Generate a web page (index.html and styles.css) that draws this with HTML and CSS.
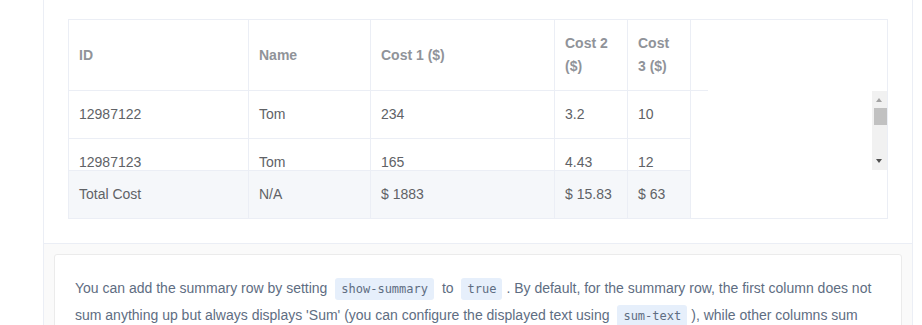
FILE: index.html
```html
<!DOCTYPE html>
<html lang="en">
<head>
<meta charset="utf-8">
<title>Table summary row</title>
<link rel="stylesheet" href="styles.css">
</head>
<body>
<div class="demo-block">
  <div class="source">
    <div class="el-table" role="table">
      <div class="thead" role="rowgroup">
        <div class="tr head-row" role="row">
          <div class="th" role="columnheader"><div class="cell">ID</div></div>
          <div class="th" role="columnheader"><div class="cell">Name</div></div>
          <div class="th" role="columnheader"><div class="cell">Cost 1 ($)</div></div>
          <div class="th" role="columnheader"><div class="cell">Cost 2 ($)</div></div>
          <div class="th" role="columnheader"><div class="cell">Cost 3 ($)</div></div>
          <div class="th gutter"></div>
        </div>
      </div>
      <div class="tbody" role="rowgroup">
        <div class="tr" role="row">
          <div class="td" role="cell"><div class="cell">12987122</div></div>
          <div class="td" role="cell"><div class="cell">Tom</div></div>
          <div class="td" role="cell"><div class="cell">234</div></div>
          <div class="td" role="cell"><div class="cell">3.2</div></div>
          <div class="td" role="cell"><div class="cell">10</div></div>
        </div>
        <div class="tr" role="row">
          <div class="td" role="cell"><div class="cell">12987123</div></div>
          <div class="td" role="cell"><div class="cell">Tom</div></div>
          <div class="td" role="cell"><div class="cell">165</div></div>
          <div class="td" role="cell"><div class="cell">4.43</div></div>
          <div class="td" role="cell"><div class="cell">12</div></div>
        </div>
        <div class="scrollbar" aria-hidden="true">
          <span class="arrow up"></span>
          <span class="thumb"></span>
          <span class="arrow down"></span>
        </div>
      </div>
      <div class="tfoot" role="rowgroup">
        <div class="tr foot-row" role="row">
          <div class="td" role="cell"><div class="cell">Total Cost</div></div>
          <div class="td" role="cell"><div class="cell">N/A</div></div>
          <div class="td" role="cell"><div class="cell">$ 1883</div></div>
          <div class="td" role="cell"><div class="cell">$ 15.83</div></div>
          <div class="td" role="cell"><div class="cell">$ 63</div></div>
        </div>
      </div>
    </div>
  </div>
  <div class="meta">
    <div class="description">
      <p>You can add the summary row by setting <code>show-summary</code> to <code>true</code>. By default, for the summary row, the first column does not sum anything up but always displays 'Sum' (you can configure the displayed text using <code>sum-text</code>), while other columns sum every number in that column up and display them. You can of course define your own sum behaviour. To do so, pass a method to <code>summary-method</code>, which returns an array, and each element of the returned array will be displayed in the columns of the summary row.</p>
    </div>
  </div>
</div>
</body>
</html>
```

FILE: styles.css
```css
* {
  box-sizing: border-box;
}

html, body {
  margin: 0;
  padding: 0;
  background: #ffffff;
}

body {
  font-family: "Liberation Sans", Arial, sans-serif;
  font-size: 14px;
  color: #606266;
}

.demo-block {
  margin-left: 43px;
  width: 870px;
  border-left: 1px solid #ebeef5;
  border-right: 1px solid #ebeef5;
}

.source {
  padding: 19px 24px 24px 24px;
  border-bottom: 1px solid #ebeef5;
}

.el-table {
  width: 820px;
  border: 1px solid #ebeef5;
  background: #ffffff;
}

.tr {
  display: grid;
  grid-template-columns: 180px 122px 184px 73px 63px;
}

.head-row {
  grid-template-columns: 180px 122px 184px 73px 63px 17px;
}

.th,
.td {
  display: flex;
  align-items: center;
  padding: 12px 0;
  border-right: 1px solid #ebeef5;
  border-bottom: 1px solid #ebeef5;
}

.th.gutter {
  border-right: none;
  padding: 0;
}

.cell {
  padding: 0 10px;
  line-height: 23px;
  word-break: normal;
}

.th .cell {
  font-weight: bold;
  color: #909399;
}

.tbody {
  position: relative;
  height: 79px;
  overflow: hidden;
}

.tfoot .tr {
  border-top: 1px solid #ebeef5;
  width: 622px;
}

.foot-row .td {
  background: #f5f7fa;
  border-bottom: none;
}

.scrollbar {
  position: absolute;
  top: 0;
  right: 0;
  width: 15px;
  height: 80px;
  background: #f1f1f1;
}

.scrollbar .thumb {
  position: absolute;
  left: 2px;
  top: 17px;
  width: 13px;
  height: 17px;
  background: #c1c1c1;
}

.scrollbar .arrow {
  position: absolute;
  left: 4px;
  width: 0;
  height: 0;
  border-left: 3.5px solid transparent;
  border-right: 3.5px solid transparent;
}

.scrollbar .arrow.up {
  top: 7px;
  border-bottom: 4px solid #a3a3a3;
}

.scrollbar .arrow.down {
  top: 68px;
  border-top: 4px solid #505050;
}

.meta {
  background: #fafafa;
  padding: 10px 10px 0 10px;
}

.description {
  background: #ffffff;
  border: 1px solid #ebebeb;
  border-radius: 3px;
  padding: 20px 20px 0 20px;
}

.description p {
  margin: 0;
  font-size: 14px;
  line-height: 26px;
  color: #5e6d82;
}

.description code {
  font-family: "DejaVu Sans Mono", "Liberation Mono", monospace;
  font-size: 12px;
  color: #5e6d82;
  background: #e6effb;
  padding: 4px 6px;
  margin: 0 4px;
  border-radius: 3px;
}
```
